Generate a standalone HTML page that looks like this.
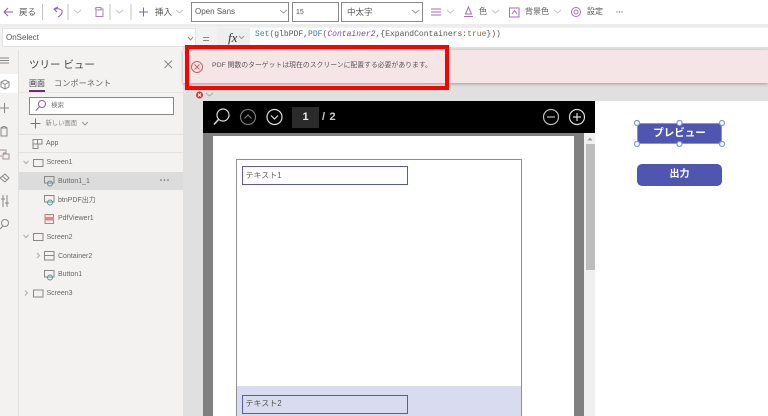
<!DOCTYPE html>
<html lang="ja"><head><meta charset="utf-8"><style>
*{box-sizing:border-box}
html,body{margin:0;padding:0;width:768px;height:416px;overflow:hidden;background:#f3f2f1;font-family:"Liberation Sans","Noto Sans CJK JP",sans-serif}
.a{position:absolute}
.t{position:absolute;white-space:nowrap;color:#555;line-height:1}
svg{position:absolute;overflow:visible}
.box{position:absolute;background:#fff;border:1px solid #8a8886}
.tr{font-size:7px;color:#666}
</style></head><body>
<div class="a" style="left:0;top:0;width:768px;height:24px;background:#fff"></div>
<div class="a" style="left:0;top:24px;width:768px;height:3px;background:#eeeded"></div>
<div class="a" style="left:0;top:27px;width:768px;height:23px;background:#f3f2f1"></div>
<!-- toolbar -->
<svg style="left:0;top:0" width="768" height="24" fill="none" stroke="#8b5f9e" stroke-width="1">
<path d="M13 12H4M8 8L4 12L8 16"/>
<path d="M58 7L54 9L57 12M55 9C60 8 63 10 62 13C61 15 60 16 58 17"/>
<path d="M94.500 9H96V16.500H103V9H101M96 7.500H101V10H96Z" stroke="#a58ab0"/>
<path d="M143.500 7.500V16.500M139 12H148"/>
<path d="M431 9H441M431 12H441M431 15H441" stroke="#a56fb8"/>
<path d="M468.500 7L465.500 14H471.500ZM464 16.500H473" stroke="#a56fb8"/>
<path d="M509.500 8H519V17H509.500ZM512 14L514.500 10.500L517 14" stroke="#a56fb8"/>
<circle cx="576" cy="12" r="2" stroke="#a56fb8"/><circle cx="576" cy="12" r="4.500" stroke="#a56fb8"/>
<g stroke="#c4c2c0"><path d="M42.500 4V20M68 4V20M110 4V20M131 4V20"/>
<path d="M74 10L77.500 13L81 10M116 10L119.500 13L123 10M176 10L179.500 13L183 10M447 10L450.500 13L454 10M492 10L495.500 13L499 10M554 10L557.500 13L561 10"/></g>
</svg>
<div class="t" style="left:19px;top:8px;font-size:8.500px">戻る</div>
<div class="t" style="left:155px;top:8px;font-size:8.500px">挿入</div>
<div class="box" style="left:191px;top:2px;width:98px;height:20px"></div>
<div class="t" style="left:195px;top:8px;font-size:8px">Open Sans</div>
<svg style="left:0;top:0" width="768" height="24" fill="none" stroke="#999"><path d="M280 10L283.500 13L287 10"/></svg>
<div class="box" style="left:292px;top:2px;width:47px;height:20px"></div>
<div class="t" style="left:296px;top:9px;font-size:7px">15</div>
<div class="box" style="left:341px;top:2px;width:82px;height:20px"></div>
<svg style="left:0;top:0" width="768" height="24" fill="none" stroke="#999"><path d="M412 10L415.500 13L419 10"/></svg>
<div class="t" style="left:347px;top:8px;font-size:8.500px">中太字</div>
<div class="t" style="left:479px;top:8px;font-size:8px">色</div>
<div class="t" style="left:525px;top:8px;font-size:8px">背景色</div>
<div class="t" style="left:587px;top:8px;font-size:8px">設定</div>
<svg style="left:616px;top:11px" width="10" height="2" fill="#888"><circle cx="1" cy="1" r=".7"/><circle cx="3.500" cy="1" r=".7"/><circle cx="6" cy="1" r=".7"/></svg>
<!-- formula -->
<div class="a" style="left:2px;top:28px;width:194px;height:19px;background:#fff;border:1px solid #e3e2e1"></div>
<div class="t" style="left:6px;top:34px;font-size:8px">OnSelect</div>
<svg style="left:0;top:28px" width="250" height="20" fill="none" stroke="#888"><path d="M188 9L190.500 12L193 9M203 9.500H209M203 12.500H209"/></svg>
<div class="a" style="left:217px;top:28px;width:33px;height:19px;background:#efeeed"></div>
<svg style="left:0;top:28px" width="250" height="20" fill="none" stroke="#999"><path d="M239 8L241.500 10.500L244 8"/></svg>
<div class="t" style="left:228px;top:30px;font:italic 13px 'Liberation Serif',serif;color:#333">fx</div>
<div class="a" style="left:250px;top:28px;width:518px;height:19px;background:#fff"></div>
<div class="t" style="left:255px;top:29px;font:8.040px/12px 'Liberation Mono',monospace;color:#555"><span style="color:#3a78b5">Set</span>(glbPDF,<span style="color:#3a78b5">PDF</span>(<i style="color:#7a4a9e">Container2</i>,{ExpandContainers:<span style="color:#8a6d3b">true</span>}))</div>
<!-- rail -->
<div class="a" style="left:0;top:50px;width:19px;height:366px;background:#f3f2f1;border-right:1px solid #e1e0df"></div>
<div class="a" style="left:0;top:74px;width:18px;height:19px;background:#fff"></div>
<svg style="left:0;top:50px" width="18" height="190" fill="none" stroke="#888">
<path d="M0 8H9M0 10.500H9M0 13H9"/>
<path d="M1 32L5 30L9 32V37L5 39L1 37ZM1 32L5 34.500L9 32M5 34.500V39"/>
<path d="M0 58H9M4.500 53V63"/>
<path d="M1 78H7V86H1ZM1 78C3 76 5 76 7 78"/>
<path d="M0 100H6V103H3M3 104H9V109H3ZM0 106H2" stroke="#a0908f"/>
<path d="M0 128L5 124L9 128L5 132Z M2 126L7 130"/>
<path d="M3 145V157M7 145V157M1 149H5M5 153H9"/>
<circle cx="5" cy="173" r="3.500"/><path d="M3 176L0 179"/>
</svg>
<!-- tree panel -->
<div class="a" style="left:19px;top:50px;width:164px;height:366px;background:#f3f2f1"></div>
<div class="t" style="left:29px;top:60px;font-size:10.500px;color:#444">ツリー ビュー</div>
<svg style="left:160px;top:59px" width="12" height="12" stroke="#888" fill="none"><path d="M4.500 1.500L12 9M12 1.500L4.500 9"/></svg>
<div class="t" style="left:29px;top:80px;font-size:8px;color:#444">画面</div>
<div class="t" style="left:54px;top:80px;font-size:8.200px;color:#666">コンポーネント</div>
<div class="a" style="left:29px;top:90px;width:16px;height:2px;background:#742774"></div>
<div class="a" style="left:19px;top:92px;width:164px;height:1px;background:#e6e5e4"></div>
<div class="a" style="left:29px;top:97px;width:145px;height:18px;background:#fff;border:1px solid #8a8886"></div>
<svg style="left:36px;top:99px" width="14" height="14" fill="none" stroke="#8b5f9e"><circle cx="6" cy="5" r="3.500"/><path d="M3.500 7.500L0 11.500"/></svg>
<div class="t" style="left:51px;top:103px;font-size:6.500px;color:#777">検索</div>
<svg style="left:30px;top:118px" width="80" height="12" fill="none" stroke="#8b5f9e"><path d="M5.500 0.500V10.500M0.500 5.500H10.500"/><path d="M52 4L55 7L58 4" stroke="#999"/></svg>
<div class="t" style="left:45.500px;top:121px;font-size:6.300px;color:#888">新しい画面</div>
<div class="a" style="left:19px;top:134px;width:164px;height:1px;background:#e3e2e1"></div>
<div class="a" style="left:19px;top:152px;width:164px;height:1px;background:#e3e2e1"></div>
<div class="a" style="left:19px;top:172px;width:164px;height:18px;background:#dcdcdc"></div>
<svg style="left:0;top:135px" width="183" height="170" fill="none" stroke="#8a8886">
<path d="M33 4.500H42V9H38V13.500H33ZM33 9H38M37.500 4.500V9"/>
<rect x="33.500" y="24.500" width="9.500" height="7"/>
<rect x="33.500" y="98.500" width="9.500" height="7"/>
<rect x="33.500" y="155" width="9.500" height="7"/>
<path d="M23.500 26L26 28.500L28.500 26M23.500 100L26 102.500L28.500 100M25 155.500L27.500 158L25 160.500M37 118L39.500 120.500L37 123" stroke="#aaa"/>
<rect x="44.500" y="116.500" width="9.500" height="8.500"/><path d="M44.500 120.500H54"/>
<rect x="44.500" y="41.500" width="9.500" height="6.500"/><circle cx="50" cy="48.500" r="2.500" stroke="#4a9a9a"/>
<rect x="44.500" y="60.500" width="9.500" height="6.500"/><circle cx="50" cy="67.500" r="2.500" stroke="#4a9a9a"/>
<rect x="44.500" y="135.500" width="9.500" height="6.500"/><circle cx="50" cy="142.500" r="2.500" stroke="#4a9a9a"/>
<rect x="45" y="79.500" width="8.500" height="9" stroke="#c77"/><rect x="44.500" y="82" width="9.500" height="3.500" fill="#d88" stroke="none"/>
</svg>
<div class="t tr" style="left:46px;top:140px;">App</div>
<div class="t tr" style="left:46.500px;top:159px;">Screen1</div>
<div class="t tr" style="left:58px;top:177.500px;">Button1_1</div>
<svg style="left:160px;top:179px" width="10" height="2" fill="#666"><circle cx="1" cy="1" r=".8"/><circle cx="4.500" cy="1" r=".8"/><circle cx="8" cy="1" r=".8"/></svg>
<div class="t tr" style="left:58px;top:196.500px;">btnPDF出力</div>
<div class="t tr" style="left:58px;top:214.500px;">PdfViewer1</div>
<div class="t tr" style="left:46.500px;top:233.500px;">Screen2</div>
<div class="t tr" style="left:58px;top:252.500px;">Container2</div>
<div class="t tr" style="left:58px;top:271px;">Button1</div>
<div class="t tr" style="left:46.500px;top:289.500px;">Screen3</div>
<!-- canvas -->
<div class="a" style="left:183px;top:47px;width:585px;height:369px;background:#e0e0e0"></div>
<div class="a" style="left:595px;top:101px;width:173px;height:315px;background:#fff"></div>
<!-- pdf viewer -->
<div class="a" style="left:203px;top:101px;width:392px;height:315px;background:#808080"></div>
<div class="a" style="left:203px;top:101px;width:392px;height:32px;background:#000"></div>
<svg style="left:203px;top:101px" width="393" height="31" fill="none" stroke="#ddd" stroke-width="1.200">
<circle cx="20" cy="14" r="6"/><path d="M15.500 18.500L11 23.500" stroke-width="1.500"/>
<circle cx="45" cy="16" r="7.500" stroke="#777"/><path d="M41.500 17.500L45 14L48.500 17.500" stroke="#777"/>
<circle cx="71.500" cy="16" r="7.500"/><path d="M68 14.500L71.500 18L75 14.500"/>
<circle cx="348" cy="16" r="7.500" stroke="#bbb"/><path d="M344 16H352" stroke="#bbb"/>
<circle cx="374" cy="16" r="7.500"/><path d="M370 16H378M374 12V20"/>
</svg>
<div class="a" style="left:292px;top:107px;width:27px;height:21px;background:#2b2b2b"></div>
<div class="t" style="left:302.500px;top:111.500px;font-size:11px;font-weight:bold;color:#eee">1</div>
<div class="t" style="left:322px;top:111.500px;font-size:11px;font-weight:bold;color:#ccc;letter-spacing:.7px">/ 2</div>
<div class="a" style="left:213px;top:136px;width:361px;height:280px;background:#fff"></div>
<div class="a" style="left:236px;top:159px;width:286px;height:257px;border:1px solid #8f8f8f;border-bottom:0"></div>
<div class="a" style="left:237px;top:386px;width:284px;height:30px;background:#d9dcef"></div>
<div class="a" style="left:242px;top:166px;width:166px;height:19px;border:1px solid #5a5aa5;background:#fff"></div>
<div class="t" style="left:245.500px;top:171.500px;font-size:8px;color:#666">テキスト1</div>
<div class="a" style="left:242px;top:395px;width:166px;height:19px;border:1px solid #5a5aa5"></div>
<div class="t" style="left:245.500px;top:400px;font-size:8px;color:#555">テキスト2</div>
<div class="a" style="left:584px;top:133px;width:11px;height:283px;background:#f0f0f0"></div>
<div class="a" style="left:585.500px;top:144px;width:9px;height:126px;background:#bdbdbd"></div>
<svg style="left:587px;top:137px" width="6" height="4"><path d="M3 0.500L5.500 3.500H0.500Z" fill="#999"/></svg>
<!-- right buttons -->
<div class="a" style="left:637px;top:123px;width:85px;height:21px;background:#4f56b0;border:1px solid #7f95e6"></div>
<div class="t" style="left:637px;top:128px;width:85px;text-align:center;font-size:10.500px;font-weight:bold;color:#fff">プレビュー</div>
<div class="a" style="left:637px;top:164px;width:85px;height:22px;background:#4f56b0;border-radius:5px"></div>
<div class="t" style="left:637px;top:170px;width:85px;text-align:center;font-size:10px;font-weight:bold;color:#fff">出力</div>
<svg style="left:630px;top:118px" width="100" height="32" fill="#fff" stroke="#7f95e6" stroke-width="1.200">
<circle cx="7" cy="5" r="2.500"/><circle cx="49.500" cy="5" r="2.500"/><circle cx="92" cy="5" r="2.500"/>
<circle cx="7" cy="26" r="2.500"/><circle cx="49.500" cy="26" r="2.500"/><circle cx="92" cy="26" r="2.500"/>
</svg>
<!-- error bar -->
<div class="a" style="left:183px;top:50px;width:585px;height:33px;background:#f6e5e6;box-shadow:0 1px 3px rgba(0,0,0,.3)"></div>
<svg style="left:190px;top:60px" width="14" height="14" fill="none" stroke="#c9606a"><circle cx="7" cy="7" r="5.500"/><path d="M4.500 4.500L9.500 9.500M9.500 4.500L4.500 9.500"/></svg>
<div class="t" style="left:212px;top:62.500px;font-size:6.850px;color:#555">PDF 関数のターゲットは現在のスクリーンに配置する必要があります。</div>
<div class="a" style="left:185px;top:45px;width:264px;height:44.500px;border:4px solid #f00"></div>
<svg style="left:195px;top:90px" width="22" height="10" fill="none"><circle cx="4.500" cy="5" r="3.500" fill="#d13438"/><path d="M3 3.500L6 6.500M6 3.500L3 6.500" stroke="#fff"/><path d="M11 3L14.500 6L18 3" stroke="#aaa"/></svg>
</body></html>
